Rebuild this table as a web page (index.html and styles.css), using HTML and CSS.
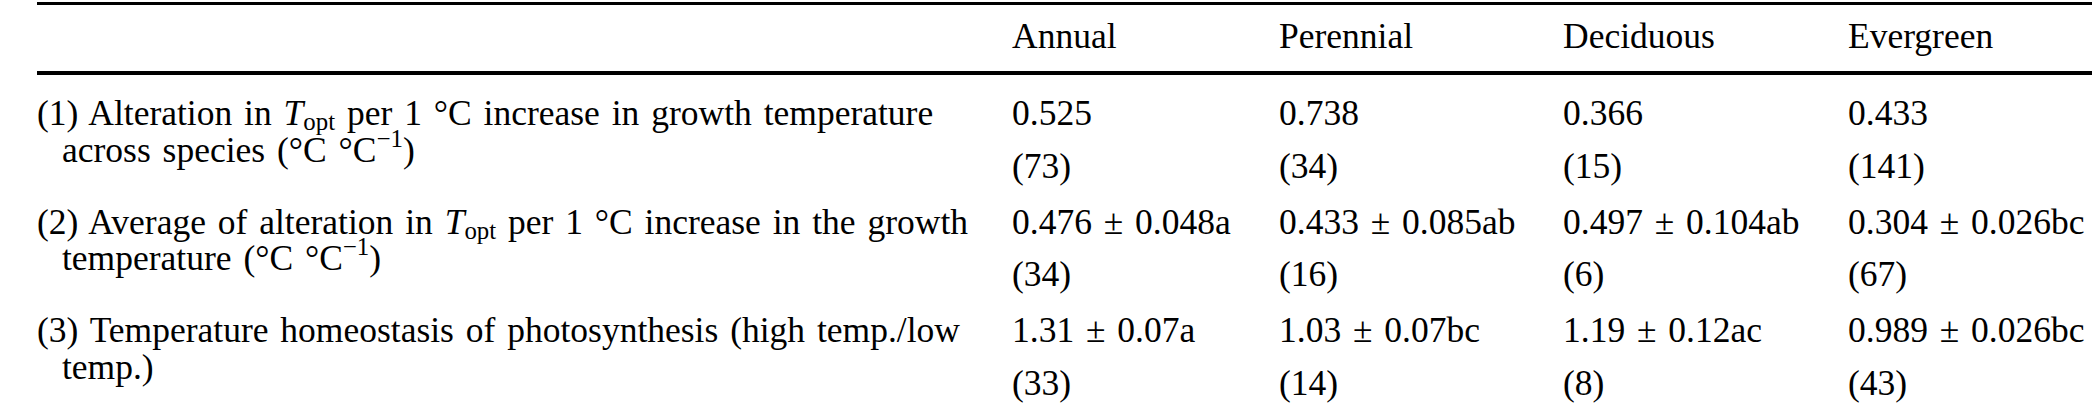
FILE: index.html
```html
<!DOCTYPE html>
<html>
<head>
<meta charset="utf-8">
<link rel="stylesheet" href="styles.css">
</head>
<body>
<table class="data">
  <colgroup>
    <col class="c-label"><col class="c-annual"><col class="c-per"><col class="c-dec"><col class="c-ever">
  </colgroup>
  <thead>
    <tr><th></th><th>Annual</th><th>Perennial</th><th>Deciduous</th><th>Evergreen</th></tr>
  </thead>
  <tbody>
    <tr>
      <td class="label">(1) Alteration in <i>T</i><sub>opt</sub> per 1 °C increase in growth temperature across species (°C °C<sup>−1</sup>)</td>
      <td><div class="v">0.525</div><div class="n">(73)</div></td>
      <td><div class="v">0.738</div><div class="n">(34)</div></td>
      <td><div class="v">0.366</div><div class="n">(15)</div></td>
      <td><div class="v">0.433</div><div class="n">(141)</div></td>
    </tr>
    <tr>
      <td class="label">(2) Average of alteration in <i>T</i><sub>opt</sub> per 1 °C increase in the growth temperature (°C °C<sup>−1</sup>)</td>
      <td><div class="v">0.476 <span class="pm">±</span> 0.048a</div><div class="n">(34)</div></td>
      <td><div class="v">0.433 <span class="pm">±</span> 0.085ab</div><div class="n">(16)</div></td>
      <td><div class="v">0.497 <span class="pm">±</span> 0.104ab</div><div class="n">(6)</div></td>
      <td><div class="v">0.304 <span class="pm">±</span> 0.026bc</div><div class="n">(67)</div></td>
    </tr>
    <tr>
      <td class="label">(3) Temperature homeostasis of photosynthesis (high temp./low temp.)</td>
      <td><div class="v">1.31 <span class="pm">±</span> 0.07a</div><div class="n">(33)</div></td>
      <td><div class="v">1.03 <span class="pm">±</span> 0.07bc</div><div class="n">(14)</div></td>
      <td><div class="v">1.19 <span class="pm">±</span> 0.12ac</div><div class="n">(8)</div></td>
      <td><div class="v">0.989 <span class="pm">±</span> 0.026bc</div><div class="n">(43)</div></td>
    </tr>
  </tbody>
</table>
</body>
</html>
```
FILE: styles.css
```css
html, body {
  margin: 0;
  padding: 0;
  background: #fff;
}
body {
  font-family: "Liberation Serif", "Times New Roman", serif;
  font-size: 35.5px;
  color: #000;
}
.data {
  margin: 2px 0 0 37px;
  width: 2055px;
  border-collapse: collapse;
  table-layout: fixed;
  border-top: 3px solid #000;
}
.c-label { width: 975px; }
.c-annual { width: 267px; }
.c-per { width: 284px; }
.c-dec { width: 285px; }
.c-ever { width: 244px; }
.data th {
  font-weight: normal;
  text-align: left;
  line-height: 40px;
  padding: 11px 0 15px 0;
  border-bottom: 4px solid #000;
  white-space: nowrap;
}
.data td {
  vertical-align: top;
  padding: 20px 0 0 0;
  line-height: 36px;
  white-space: nowrap;
}
.data td.label {
  white-space: normal;
  line-height: 36.5px;
  word-spacing: 3px;
  padding-right: 27px;
  padding-left: 25px;
  text-indent: -25px;
}
.data tbody tr:last-child td { padding-bottom: 10px; }
.n { margin-top: 16.5px; }
.pm { margin: 0 3px; }
sub, sup {
  font-size: 70%;
  line-height: 0;
  position: relative;
  vertical-align: baseline;
}
sub { top: 0.22em; }
sup { top: -0.6em; }
```
